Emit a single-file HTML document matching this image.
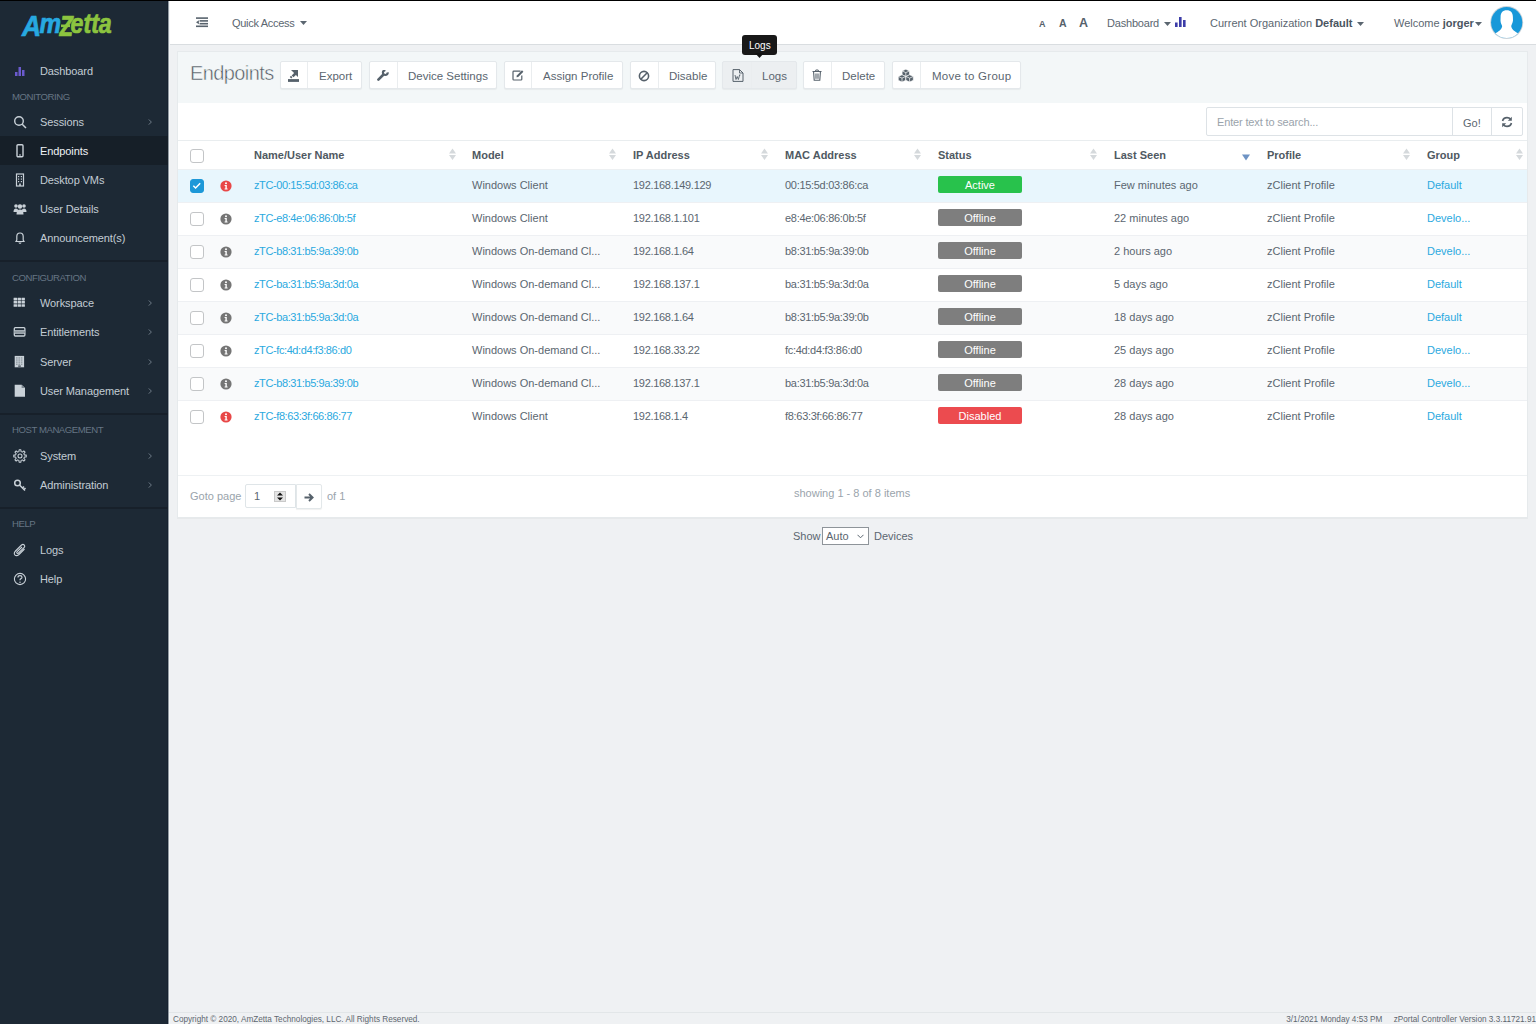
<!DOCTYPE html>
<html><head><meta charset="utf-8">
<style>
*{box-sizing:border-box;margin:0;padding:0}
html,body{width:1536px;height:1024px;overflow:hidden;background:#eff1f3;font-family:"Liberation Sans",sans-serif;color:#5e6770}
.abs{position:absolute;white-space:nowrap}
#topline{position:absolute;left:0;top:0;width:1536px;height:1px;background:#000}
#side{position:absolute;left:0;top:0;width:168px;height:1024px;background:#1d2935;border-right:1px solid #172230}
#sedge{position:absolute;left:168px;top:1px;width:2px;height:1023px;background:linear-gradient(90deg,#939ca3 50%,#f4f6f7 50%)}
.si{position:absolute;left:0;width:168px;height:29px;}
.si .lbl{position:absolute;left:40px;top:9px;font-size:11px;color:#c3ccd4;letter-spacing:-0.1px}
.si .ic{position:absolute;left:13px;top:8px;width:14px;height:14px}
.si .chev{position:absolute;left:147px;top:11.5px;width:6px;height:8px}
.sh{position:absolute;left:12px;margin-top:1px;font-size:9.6px;letter-spacing:-0.45px;color:#667584}
.sep{position:absolute;left:0;width:168px;height:2px;background:#17202a}
.hx{font-size:11px;color:#5b6670}
#hdr{position:absolute;left:168px;top:1px;width:1368px;height:44px;background:#fff;border-bottom:1px solid #d9dde0}
#panel{position:absolute;left:177px;top:51px;width:1351px;height:467px;background:#fff;box-shadow:0 1px 0 rgba(0,0,0,0.03);border:1px solid #e6eaec}
#tbar{position:absolute;left:178px;top:52px;width:1349px;height:50.5px;background:#f3f7f8}
#ttl{left:190px;top:62px;font-size:20px;letter-spacing:-0.6px;color:#4e5860;-webkit-text-stroke:0.5px #f3f7f8}
.btn{position:absolute;top:61px;height:28px;border:1px solid #e4e8eb;border-radius:2px;box-shadow:0 1px 1px rgba(0,0,0,0.05)}
.bdiv{position:absolute;top:0;width:1px;height:26px;background:#eaedef}
.blbl{top:70px;font-size:11.5px;color:#5b6670}
.cb{position:absolute;left:190px;width:14px;height:14px;border:1.3px solid #c3c5c7;border-radius:3px;background:#fff}
.cb.sel{background:#1d98d8;border-color:#1d98d8}
.th{top:149px;font-size:11px;font-weight:700;color:#4f5962}
.row{position:absolute;left:178px;width:1349px;height:33px;border-bottom:1px solid #eef0f3}
.td{font-size:11px;color:#5b6670}
.nm{letter-spacing:-0.4px}
.mac,.ip{letter-spacing:-0.3px}
.lk{color:#2aa9e0}
.badge{width:84px;height:17px;padding-top:1px;color:#fff;font-size:11px;text-align:center;line-height:17px;border-radius:2px}
</style></head><body>
<div id="side">
  <!-- logo -->
  <svg class="abs" style="left:0;top:0" width="168" height="50" viewBox="0 0 168 50" font-family="Liberation Sans" font-weight="bold" font-style="italic" stroke-width="0.7">
  <text transform="translate(22,36) scale(0.88,1)" font-size="30" fill="#27a9e1" stroke="#27a9e1">A</text>
  <text transform="translate(39.6,33) scale(0.9,1)" font-size="27" fill="#27a9e1" stroke="#27a9e1">m</text>
  <text transform="translate(59.6,36) scale(0.74,1)" font-size="30" fill="#8cc43f" stroke="#8cc43f">Z</text>
  <text transform="translate(70.5,33) scale(0.86,1)" font-size="27" fill="#8cc43f" stroke="#8cc43f">etta</text>
  <rect x="61" y="24.5" width="9" height="2.6" fill="#8cc43f"/>
  </svg>
<div class="si" style="top:56px;"><svg class="ic" viewBox="0 0 14 14"><rect x="2" y="8" width="2.5" height="4" fill="#6a5acd"/><rect x="5.5" y="3" width="2.5" height="9" fill="#6a5acd"/><rect x="9" y="6" width="2.5" height="6" fill="#6a5acd"/></svg><span class="lbl" style="">Dashboard</span></div>
<div class="si" style="top:107px;"><svg class="ic" viewBox="0 0 14 14"><circle cx="6" cy="6" r="4.3" fill="none" stroke="#c9d1d8" stroke-width="1.4"/><line x1="9.2" y1="9.2" x2="13" y2="13" stroke="#c9d1d8" stroke-width="1.5"/></svg><span class="lbl" style="">Sessions</span><svg class="chev" viewBox="0 0 6 10"><path d="M1.5 0.6 L4.7 3.8 L1.5 7" fill="none" stroke="#808c97" stroke-width="1.05"/></svg></div>
<div class="si" style="top:136px;background:#161f28;"><svg class="ic" viewBox="0 0 14 14"><rect x="4" y="0.8" width="6" height="12" rx="1" fill="none" stroke="#c9d1d8" stroke-width="1.4"/><line x1="6" y1="11" x2="8" y2="11" stroke="#c9d1d8" stroke-width="1"/></svg><span class="lbl" style="color:#eef2f5;">Endpoints</span></div>
<div class="si" style="top:165px;"><svg class="ic" viewBox="0 0 14 14"><rect x="3.5" y="1" width="7" height="12" fill="none" stroke="#c9d1d8" stroke-width="1.2"/><g fill="#c9d1d8"><rect x="5" y="3" width="1.2" height="1.2"/><rect x="7.8" y="3" width="1.2" height="1.2"/><rect x="5" y="5.5" width="1.2" height="1.2"/><rect x="7.8" y="5.5" width="1.2" height="1.2"/><rect x="5" y="8" width="1.2" height="1.2"/><rect x="7.8" y="8" width="1.2" height="1.2"/><rect x="6.2" y="10.5" width="1.6" height="2.5"/></g></svg><span class="lbl" style="">Desktop VMs</span></div>
<div class="si" style="top:194px;"><svg class="ic" viewBox="0 0 14 14"><g fill="#c9d1d8"><circle cx="3" cy="4" r="1.8"/><circle cx="11" cy="4" r="1.8"/><circle cx="7" cy="4.5" r="2.2"/><path d="M0.5 10 Q0.5 6.5 3 6.5 Q5 6.5 5 8 L5 10Z"/><path d="M13.5 10 Q13.5 6.5 11 6.5 Q9 6.5 9 8 L9 10Z"/><path d="M3.5 12.5 Q3.5 7.5 7 7.5 Q10.5 7.5 10.5 12.5Z"/></g></svg><span class="lbl" style="">User Details</span></div>
<div class="si" style="top:223px;"><svg class="ic" viewBox="0 0 14 14"><path d="M3 10.5 L3.8 9 L3.8 5.5 Q3.8 2 7 2 Q10.2 2 10.2 5.5 L10.2 9 L11 10.5 Z" fill="none" stroke="#c9d1d8" stroke-width="1.2"/><path d="M5.8 11.5 Q7 13.3 8.2 11.5" fill="none" stroke="#c9d1d8" stroke-width="1.1"/></svg><span class="lbl" style="">Announcement(s)</span></div>
<div class="si" style="top:288px;"><svg class="ic" viewBox="0 0 14 14"><g fill="#c9d1d8"><rect x="0.60" y="1.80" width="3.4" height="2.6" rx="0.3"/><rect x="0.60" y="5.00" width="3.4" height="2.6" rx="0.3"/><rect x="0.60" y="8.20" width="3.4" height="2.6" rx="0.3"/><rect x="4.55" y="1.80" width="3.4" height="2.6" rx="0.3"/><rect x="4.55" y="5.00" width="3.4" height="2.6" rx="0.3"/><rect x="4.55" y="8.20" width="3.4" height="2.6" rx="0.3"/><rect x="8.50" y="1.80" width="3.4" height="2.6" rx="0.3"/><rect x="8.50" y="5.00" width="3.4" height="2.6" rx="0.3"/><rect x="8.50" y="8.20" width="3.4" height="2.6" rx="0.3"/></g></svg><span class="lbl" style="">Workspace</span><svg class="chev" viewBox="0 0 6 10"><path d="M1.5 0.6 L4.7 3.8 L1.5 7" fill="none" stroke="#808c97" stroke-width="1.05"/></svg></div>
<div class="si" style="top:317px;"><svg class="ic" viewBox="0 0 14 14"><rect x="1.3" y="2.7" width="10.6" height="8.3" rx="1" fill="none" stroke="#c9d1d8" stroke-width="1.3"/><rect x="1.3" y="5.6" width="10.6" height="2.6" fill="#8d979f"/><rect x="1.3" y="5.3" width="10.6" height="0.8" fill="#c9d1d8"/><rect x="1.3" y="7.9" width="10.6" height="0.8" fill="#c9d1d8"/></svg><span class="lbl" style="">Entitlements</span><svg class="chev" viewBox="0 0 6 10"><path d="M1.5 0.6 L4.7 3.8 L1.5 7" fill="none" stroke="#808c97" stroke-width="1.05"/></svg></div>
<div class="si" style="top:347px;"><svg class="ic" viewBox="0 0 14 14"><rect x="1.7" y="0.9" width="9.4" height="11.4" fill="#c9d1d8"/><g fill="#8d979f"><rect x="3.0" y="2.3" width="1.6" height="1.3"/><rect x="3.0" y="4.4" width="1.6" height="1.3"/><rect x="3.0" y="6.5" width="1.6" height="1.3"/><rect x="3.0" y="8.6" width="1.6" height="1.3"/><rect x="5.4" y="2.3" width="1.6" height="1.3"/><rect x="5.4" y="4.4" width="1.6" height="1.3"/><rect x="5.4" y="6.5" width="1.6" height="1.3"/><rect x="5.4" y="8.6" width="1.6" height="1.3"/><rect x="7.8" y="2.3" width="1.6" height="1.3"/><rect x="7.8" y="4.4" width="1.6" height="1.3"/><rect x="7.8" y="6.5" width="1.6" height="1.3"/><rect x="7.8" y="8.6" width="1.6" height="1.3"/></g><rect x="5.2" y="10.6" width="2.6" height="1" fill="#1d2935"/></svg><span class="lbl" style="">Server</span><svg class="chev" viewBox="0 0 6 10"><path d="M1.5 0.6 L4.7 3.8 L1.5 7" fill="none" stroke="#808c97" stroke-width="1.05"/></svg></div>
<div class="si" style="top:376px;"><svg class="ic" viewBox="0 0 14 14"><path d="M1.7 0.7 L8.6 0.7 L12 4.1 L12 12.8 L1.7 12.8 Z" fill="#c9d1d8"/><path d="M8.6 0.7 L8.6 4.1 L12 4.1Z" fill="#7d8891"/></svg><span class="lbl" style="">User Management</span><svg class="chev" viewBox="0 0 6 10"><path d="M1.5 0.6 L4.7 3.8 L1.5 7" fill="none" stroke="#808c97" stroke-width="1.05"/></svg></div>
<div class="si" style="top:441px;"><svg class="ic" viewBox="0 0 14 14"><path d="M11.37 5.91 L13.24 6.12 L13.24 7.88 L11.37 8.09 L10.86 9.32 L12.03 10.79 L10.79 12.03 L9.32 10.86 L8.09 11.37 L7.88 13.24 L6.12 13.24 L5.91 11.37 L4.68 10.86 L3.21 12.03 L1.97 10.79 L3.14 9.32 L2.63 8.09 L0.76 7.88 L0.76 6.12 L2.63 5.91 L3.14 4.68 L1.97 3.21 L3.21 1.97 L4.68 3.14 L5.91 2.63 L6.12 0.76 L7.88 0.76 L8.09 2.63 L9.32 3.14 L10.79 1.97 L12.03 3.21 L10.86 4.68Z" fill="none" stroke="#c9d1d8" stroke-width="1.05" stroke-linejoin="round"/><circle cx="7" cy="7" r="2" fill="none" stroke="#c9d1d8" stroke-width="1.05"/></svg><span class="lbl" style="">System</span><svg class="chev" viewBox="0 0 6 10"><path d="M1.5 0.6 L4.7 3.8 L1.5 7" fill="none" stroke="#808c97" stroke-width="1.05"/></svg></div>
<div class="si" style="top:470px;"><svg class="ic" viewBox="0 0 14 14"><circle cx="4.5" cy="5" r="2.8" fill="none" stroke="#c9d1d8" stroke-width="1.5"/><path d="M6.5 7 L12 12.5 M9.5 10 L11 8.5 M11 11.5 L12.5 10" stroke="#c9d1d8" stroke-width="1.5" fill="none"/></svg><span class="lbl" style="">Administration</span><svg class="chev" viewBox="0 0 6 10"><path d="M1.5 0.6 L4.7 3.8 L1.5 7" fill="none" stroke="#808c97" stroke-width="1.05"/></svg></div>
<div class="si" style="top:535px;"><svg class="ic" viewBox="0 0 14 14"><path d="M11.5 6 L6 11.5 Q3.5 13.5 1.8 11.8 Q0.5 10 2.5 8 L8.5 2 Q10 0.8 11.2 2 Q12.3 3.3 11 4.6 L5.5 10 Q4.6 10.8 4 10.2 Q3.4 9.6 4.2 8.7 L9 4" fill="none" stroke="#c9d1d8" stroke-width="1.1"/></svg><span class="lbl" style="">Logs</span></div>
<div class="si" style="top:564px;"><svg class="ic" viewBox="0 0 14 14"><circle cx="7" cy="7" r="5.6" fill="none" stroke="#c9d1d8" stroke-width="1.1"/><path d="M5 5.4 Q5 3.6 7 3.6 Q9 3.6 9 5.2 Q9 6.3 7.6 6.9 Q7 7.2 7 8.3" fill="none" stroke="#c9d1d8" stroke-width="1.2"/><circle cx="7" cy="10.2" r="0.75" fill="#c9d1d8"/></svg><span class="lbl" style="">Help</span></div>
<span class="sh" style="top:90px">MONITORING</span>
<span class="sh" style="top:271px">CONFIGURATION</span>
<span class="sh" style="top:423px">HOST MANAGEMENT</span>
<span class="sh" style="top:517px">HELP</span>
<div class="sep" style="top:260px"></div>
<div class="sep" style="top:413px"></div>
<div class="sep" style="top:507px"></div>
</div>
<div id="hdr"></div>
<div id="topline"></div>
<div id="sedge"></div>
<svg class="abs" style="left:196px;top:16px" width="13" height="12" viewBox="0 0 13 12"><g fill="#58636d"><rect x="0" y="1.3" width="12" height="1.6"/><rect x="3.6" y="4.1" width="8.4" height="1.6"/><rect x="3.6" y="6.9" width="8.4" height="1.6"/><rect x="0" y="9.5" width="12" height="1.6"/><path d="M0 6.2 L2.9 4.2 L2.9 8.2Z"/></g></svg>
<span class="abs hx" style="left:232px;top:17px;letter-spacing:-0.3px">Quick Access</span>
<svg class="abs" style="left:300px;top:21px" width="7" height="4" viewBox="0 0 7 4"><path d="M0 0 L7 0 L3.5 4Z" fill="#5b6670"/></svg>
<span class="abs" style="left:1039px;top:19px;font-size:9px;font-weight:700;color:#56616b">A</span>
<span class="abs" style="left:1059px;top:17px;font-size:10.5px;font-weight:700;color:#56616b">A</span>
<span class="abs" style="left:1079px;top:16px;font-size:12.5px;font-weight:700;color:#56616b">A</span>
<span class="abs hx" style="left:1107px;top:17px;letter-spacing:-0.2px">Dashboard</span>
<svg class="abs" style="left:1164px;top:22px" width="7" height="4" viewBox="0 0 7 4"><path d="M0 0 L7 0 L3.5 4Z" fill="#5b6670"/></svg>
<svg class="abs" style="left:1175px;top:17px" width="11" height="10" viewBox="0 0 11 10"><g fill="#3c3ca8"><rect x="0" y="5.5" width="2.6" height="4.5"/><rect x="4" y="0" width="2.6" height="10"/><rect x="8" y="3" width="2.6" height="7"/></g></svg>
<span class="abs hx" style="left:1210px;top:17px">Current Organization <b style="color:#4a5560">Default</b></span>
<svg class="abs" style="left:1357px;top:22px" width="7" height="4" viewBox="0 0 7 4"><path d="M0 0 L7 0 L3.5 4Z" fill="#5b6670"/></svg>
<span class="abs hx" style="left:1394px;top:17px">Welcome <b style="color:#4a5560">jorger</b></span>
<svg class="abs" style="left:1475px;top:22px" width="7" height="4" viewBox="0 0 7 4"><path d="M0 0 L7 0 L3.5 4Z" fill="#5b6670"/></svg>
<svg class="abs" style="left:1490px;top:5.5px" width="34" height="34" viewBox="0 0 34 34"><defs><clipPath id="avc"><circle cx="16.7" cy="16.5" r="15.6"/></clipPath></defs><circle cx="16.7" cy="16.5" r="16.5" fill="#c9d3da"/><circle cx="16.7" cy="16.5" r="15.6" fill="#1898d9"/><g clip-path="url(#avc)"><path d="M16.7 4.3 C20.8 4.3 22.9 7 22.9 11 L23 14.5 C22.6 17 21.8 18.3 21.2 20 C21.6 23.5 25 25.8 29 27.8 L29 34 L4.5 34 L4.5 27.8 C8.5 25.8 11.8 23.5 12.2 20 C11.4 18.3 10.6 17 10.5 14.5 L10.6 11 C10.6 7 12.6 4.3 16.7 4.3Z" fill="#fff"/></g></svg>
<div id="panel"></div><div id="tbar"></div>
<span class="abs" id="ttl">Endpoints</span>
<div class="btn" style="left:280px;width:82px;background:#fff"><div class="bdiv" style="left:26px"></div></div><svg class="abs" style="left:288px;top:69px" width="12" height="14" viewBox="0 0 12 14"><path d="M3 1 L10 1 L10 8 L7.9 5.9 L5.5 8.3 L3.7 6.5 L6.1 4.1 Z" fill="#56616b"/><path d="M1.8 8 L3 6.8 L4.4 8.2 L3.2 9.4 Z" fill="#56616b"/><rect x="0" y="10.1" width="11" height="2.8" fill="#56616b"/></svg><span class="abs blbl" style="left:319px">Export</span>
<div class="btn" style="left:369px;width:128px;background:#fff"><div class="bdiv" style="left:27px"></div></div><svg class="abs" style="left:377px;top:70px" width="13" height="12" viewBox="0 0 13 12"><path d="M1.4 9.6 L6 5" stroke="#56616b" stroke-width="2.6" stroke-linecap="round"/><path d="M10.69 2.39 A2.4 2.4 0 1 1 8.51 0.21" fill="none" stroke="#56616b" stroke-width="2.2"/></svg><span class="abs blbl" style="left:408px">Device Settings</span>
<div class="btn" style="left:504px;width:119px;background:#fff"><div class="bdiv" style="left:26px"></div></div><svg class="abs" style="left:512px;top:69px" width="12" height="12" viewBox="0 0 12 12"><path d="M8.5 2.2 L1.8 2.2 Q1 2.2 1 3 L1 10.2 Q1 11 1.8 11 L9 11 Q9.8 11 9.8 10.2 L9.8 6.5" fill="none" stroke="#56616b" stroke-width="1.2"/><path d="M4.5 8.3 L4.8 6.5 L10 1.3 L11.4 2.7 L6.2 7.9 Z" fill="#56616b"/></svg><span class="abs blbl" style="left:543px">Assign Profile</span>
<div class="btn" style="left:630px;width:86px;background:#fff"><div class="bdiv" style="left:27px"></div></div><svg class="abs" style="left:638px;top:70px" width="12" height="12" viewBox="0 0 12 12"><circle cx="6" cy="6" r="4.6" fill="none" stroke="#56616b" stroke-width="1.6"/><line x1="2.8" y1="9.2" x2="9.2" y2="2.8" stroke="#56616b" stroke-width="1.6"/></svg><span class="abs blbl" style="left:669px">Disable</span>
<div class="btn" style="left:722px;width:75px;background:#eceff1"><div class="bdiv" style="left:28px"></div></div><svg class="abs" style="left:732px;top:69px" width="12" height="13" viewBox="0 0 12 13"><path d="M1 0.6 L7.5 0.6 L11 4 L11 12.4 L1 12.4 Z" fill="none" stroke="#56616b" stroke-width="1"/><path d="M7.5 0.6 L7.5 4 L11 4" fill="none" stroke="#56616b" stroke-width="0.9"/><path d="M3 6 L4 10.5 L5.2 7.5 L6.4 10.5 L7.6 6 M7.2 6 L8.4 6" fill="none" stroke="#56616b" stroke-width="0.9"/></svg><span class="abs blbl" style="left:762px">Logs</span>
<div class="btn" style="left:803px;width:82px;background:#fff"><div class="bdiv" style="left:27px"></div></div><svg class="abs" style="left:812px;top:69px" width="10" height="12" viewBox="0 0 10 12"><path d="M0.5 2.5 L9.5 2.5 M3.5 2.5 L3.8 1 L6.2 1 L6.5 2.5" fill="none" stroke="#56616b" stroke-width="1"/><path d="M1.6 3 L2.2 11.2 L7.8 11.2 L8.4 3" fill="none" stroke="#56616b" stroke-width="1.1"/><path d="M3.8 4.5 L3.8 9.8 M5 4.5 L5 9.8 M6.2 4.5 L6.2 9.8" stroke="#56616b" stroke-width="0.8"/></svg><span class="abs blbl" style="left:842px">Delete</span>
<div class="btn" style="left:892px;width:129px;background:#fff"><div class="bdiv" style="left:27px"></div></div><svg class="abs" style="left:898px;top:69px" width="16" height="14" viewBox="0 0 16 14"><path d="M7.8 0.3 L11.5 1.96 L11.5 5.84 L7.8 7.5 L4.1 5.84 L4.1 1.96Z" fill="#56616b" stroke="#fff" stroke-width="0.6"/><path d="M4.1 1.96 L7.8 3.61 L11.5 1.96 M7.8 3.61 L7.8 7.5" fill="none" stroke="#fff" stroke-width="0.7"/><path d="M4 5.8 L7.7 7.46 L7.7 11.34 L4 13.0 L0.2999999999999998 11.34 L0.2999999999999998 7.46Z" fill="#56616b" stroke="#fff" stroke-width="0.6"/><path d="M0.2999999999999998 7.46 L4 9.11 L7.7 7.46 M4 9.11 L4 13.0" fill="none" stroke="#fff" stroke-width="0.7"/><path d="M11.6 5.8 L15.3 7.46 L15.3 11.34 L11.6 13.0 L7.8999999999999995 11.34 L7.8999999999999995 7.46Z" fill="#56616b" stroke="#fff" stroke-width="0.6"/><path d="M7.8999999999999995 7.46 L11.6 9.11 L15.3 7.46 M11.6 9.11 L11.6 13.0" fill="none" stroke="#fff" stroke-width="0.7"/></svg><span class="abs blbl" style="left:932px"><span style="letter-spacing:0.25px">Move to Group</span></span>
<div class="abs" style="left:742px;top:35px;width:35px;height:19.5px;background:#181818;border-radius:3px"></div><svg class="abs" style="left:755px;top:53px" width="9" height="6" viewBox="0 0 9 6"><path d="M0 0 L9 0 L4.5 5Z" fill="#111"/></svg><span class="abs" style="left:749px;top:40px;font-size:10px;color:#fff">Logs</span>
<div class="abs" style="left:1206px;top:107px;width:317px;height:29px;border:1px solid #dde2e6;border-radius:2px;background:#fff"></div>
<div class="abs" style="left:1452px;top:107px;width:1px;height:29px;background:#dde2e6"></div><div class="abs" style="left:1491px;top:107px;width:1px;height:29px;background:#dde2e6"></div>
<span class="abs" style="left:1217px;top:116px;font-size:11px;letter-spacing:-0.15px;color:#9aa3ab">Enter text to search...</span>
<span class="abs" style="left:1463px;top:117px;font-size:11px;color:#5b6670">Go!</span>
<svg class="abs" style="left:1501px;top:116px" width="12" height="12" viewBox="0 0 12 12"><path d="M1.6 5 Q2.3 1.6 6 1.6 Q8.3 1.6 9.6 3.3" fill="none" stroke="#56616b" stroke-width="1.7"/><path d="M10.8 0.8 L10.8 4.8 L6.8 4.8Z" fill="#56616b"/><path d="M10.4 7 Q9.7 10.4 6 10.4 Q3.7 10.4 2.4 8.7" fill="none" stroke="#56616b" stroke-width="1.7"/><path d="M1.2 11.2 L1.2 7.2 L5.2 7.2Z" fill="#56616b"/></svg>
<div class="abs" style="left:178px;top:140px;width:1349px;height:1px;background:#e9edef"></div>
<div class="cb" style="top:149px"></div>
<div class="abs" style="left:178px;top:169px;width:1349px;height:1px;background:#edf0f2"></div>
<span class="abs th" style="left:254px">Name/User Name</span>
<svg class="abs" style="left:449px;top:148px" width="7" height="13" viewBox="0 0 7 13"><path d="M3.5 0.5 L7 5.5 L0 5.5Z M0 7 L7 7 L3.5 12Z" fill="#d5d9dc"/></svg>
<span class="abs th" style="left:472px">Model</span>
<svg class="abs" style="left:609px;top:148px" width="7" height="13" viewBox="0 0 7 13"><path d="M3.5 0.5 L7 5.5 L0 5.5Z M0 7 L7 7 L3.5 12Z" fill="#d5d9dc"/></svg>
<span class="abs th" style="left:633px">IP Address</span>
<svg class="abs" style="left:761px;top:148px" width="7" height="13" viewBox="0 0 7 13"><path d="M3.5 0.5 L7 5.5 L0 5.5Z M0 7 L7 7 L3.5 12Z" fill="#d5d9dc"/></svg>
<span class="abs th" style="left:785px">MAC Address</span>
<svg class="abs" style="left:914px;top:148px" width="7" height="13" viewBox="0 0 7 13"><path d="M3.5 0.5 L7 5.5 L0 5.5Z M0 7 L7 7 L3.5 12Z" fill="#d5d9dc"/></svg>
<span class="abs th" style="left:938px">Status</span>
<svg class="abs" style="left:1090px;top:148px" width="7" height="13" viewBox="0 0 7 13"><path d="M3.5 0.5 L7 5.5 L0 5.5Z M0 7 L7 7 L3.5 12Z" fill="#d5d9dc"/></svg>
<span class="abs th" style="left:1114px">Last Seen</span>
<span class="abs th" style="left:1267px">Profile</span>
<svg class="abs" style="left:1403px;top:148px" width="7" height="13" viewBox="0 0 7 13"><path d="M3.5 0.5 L7 5.5 L0 5.5Z M0 7 L7 7 L3.5 12Z" fill="#d5d9dc"/></svg>
<span class="abs th" style="left:1427px">Group</span>
<svg class="abs" style="left:1516px;top:148px" width="7" height="13" viewBox="0 0 7 13"><path d="M3.5 0.5 L7 5.5 L0 5.5Z M0 7 L7 7 L3.5 12Z" fill="#d5d9dc"/></svg>
<svg class="abs" style="left:1242px;top:154px" width="8" height="7" viewBox="0 0 8 7"><path d="M0 0.5 L8 0.5 L4 6.5Z" fill="#6e93c4"/></svg>
<div class="row" style="top:170px;background:#e8f6fd;"></div>
<div class="cb sel" style="top:179px"><svg width="13" height="13" viewBox="0 0 13 13" style="position:absolute;left:-1px;top:-1px"><path d="M3.3 6.8 L5.6 9 L10.2 4.3" fill="none" stroke="#fff" stroke-width="1.5"/></svg></div>
<svg class="abs" style="left:220px;top:180px" width="12" height="12" viewBox="0 0 12 12"><circle cx="6" cy="6" r="5.6" fill="#e84747"/><circle cx="6" cy="3.3" r="1" fill="#fff"/><path d="M4.6 5 L6.8 5 L6.8 8.5 L7.6 8.5 L7.6 9.5 L4.6 9.5 L4.6 8.5 L5.4 8.5 L5.4 6 L4.6 6Z" fill="#fff"/></svg>
<span class="abs td lk nm" style="left:254px;top:179px">zTC-00:15:5d:03:86:ca</span>
<span class="abs td" style="left:472px;top:179px">Windows Client</span>
<span class="abs td ip" style="left:633px;top:179px">192.168.149.129</span>
<span class="abs td mac" style="left:785px;top:179px">00:15:5d:03:86:ca</span>
<div class="abs badge" style="left:938px;top:176px;background:#28c24c">Active</div>
<span class="abs td" style="left:1114px;top:179px">Few minutes ago</span>
<span class="abs td" style="left:1267px;top:179px">zClient Profile</span>
<span class="abs td lk" style="left:1427px;top:179px">Default</span>
<div class="row" style="top:203px;background:#fff;"></div>
<div class="cb" style="top:212px"></div>
<svg class="abs" style="left:220px;top:213px" width="12" height="12" viewBox="0 0 12 12"><circle cx="6" cy="6" r="5.6" fill="#757575"/><circle cx="6" cy="3.3" r="1" fill="#fff"/><path d="M4.6 5 L6.8 5 L6.8 8.5 L7.6 8.5 L7.6 9.5 L4.6 9.5 L4.6 8.5 L5.4 8.5 L5.4 6 L4.6 6Z" fill="#fff"/></svg>
<span class="abs td lk nm" style="left:254px;top:212px">zTC-e8:4e:06:86:0b:5f</span>
<span class="abs td" style="left:472px;top:212px">Windows Client</span>
<span class="abs td ip" style="left:633px;top:212px">192.168.1.101</span>
<span class="abs td mac" style="left:785px;top:212px">e8:4e:06:86:0b:5f</span>
<div class="abs badge" style="left:938px;top:209px;background:#7e7e7e">Offline</div>
<span class="abs td" style="left:1114px;top:212px">22 minutes ago</span>
<span class="abs td" style="left:1267px;top:212px">zClient Profile</span>
<span class="abs td lk" style="left:1427px;top:212px">Develo...</span>
<div class="row" style="top:236px;background:#f9fafb;"></div>
<div class="cb" style="top:245px"></div>
<svg class="abs" style="left:220px;top:246px" width="12" height="12" viewBox="0 0 12 12"><circle cx="6" cy="6" r="5.6" fill="#757575"/><circle cx="6" cy="3.3" r="1" fill="#fff"/><path d="M4.6 5 L6.8 5 L6.8 8.5 L7.6 8.5 L7.6 9.5 L4.6 9.5 L4.6 8.5 L5.4 8.5 L5.4 6 L4.6 6Z" fill="#fff"/></svg>
<span class="abs td lk nm" style="left:254px;top:245px">zTC-b8:31:b5:9a:39:0b</span>
<span class="abs td" style="left:472px;top:245px">Windows On-demand Cl...</span>
<span class="abs td ip" style="left:633px;top:245px">192.168.1.64</span>
<span class="abs td mac" style="left:785px;top:245px">b8:31:b5:9a:39:0b</span>
<div class="abs badge" style="left:938px;top:242px;background:#7e7e7e">Offline</div>
<span class="abs td" style="left:1114px;top:245px">2 hours ago</span>
<span class="abs td" style="left:1267px;top:245px">zClient Profile</span>
<span class="abs td lk" style="left:1427px;top:245px">Develo...</span>
<div class="row" style="top:269px;background:#fff;"></div>
<div class="cb" style="top:278px"></div>
<svg class="abs" style="left:220px;top:279px" width="12" height="12" viewBox="0 0 12 12"><circle cx="6" cy="6" r="5.6" fill="#757575"/><circle cx="6" cy="3.3" r="1" fill="#fff"/><path d="M4.6 5 L6.8 5 L6.8 8.5 L7.6 8.5 L7.6 9.5 L4.6 9.5 L4.6 8.5 L5.4 8.5 L5.4 6 L4.6 6Z" fill="#fff"/></svg>
<span class="abs td lk nm" style="left:254px;top:278px">zTC-ba:31:b5:9a:3d:0a</span>
<span class="abs td" style="left:472px;top:278px">Windows On-demand Cl...</span>
<span class="abs td ip" style="left:633px;top:278px">192.168.137.1</span>
<span class="abs td mac" style="left:785px;top:278px">ba:31:b5:9a:3d:0a</span>
<div class="abs badge" style="left:938px;top:275px;background:#7e7e7e">Offline</div>
<span class="abs td" style="left:1114px;top:278px">5 days ago</span>
<span class="abs td" style="left:1267px;top:278px">zClient Profile</span>
<span class="abs td lk" style="left:1427px;top:278px">Default</span>
<div class="row" style="top:302px;background:#f9fafb;"></div>
<div class="cb" style="top:311px"></div>
<svg class="abs" style="left:220px;top:312px" width="12" height="12" viewBox="0 0 12 12"><circle cx="6" cy="6" r="5.6" fill="#757575"/><circle cx="6" cy="3.3" r="1" fill="#fff"/><path d="M4.6 5 L6.8 5 L6.8 8.5 L7.6 8.5 L7.6 9.5 L4.6 9.5 L4.6 8.5 L5.4 8.5 L5.4 6 L4.6 6Z" fill="#fff"/></svg>
<span class="abs td lk nm" style="left:254px;top:311px">zTC-ba:31:b5:9a:3d:0a</span>
<span class="abs td" style="left:472px;top:311px">Windows On-demand Cl...</span>
<span class="abs td ip" style="left:633px;top:311px">192.168.1.64</span>
<span class="abs td mac" style="left:785px;top:311px">b8:31:b5:9a:39:0b</span>
<div class="abs badge" style="left:938px;top:308px;background:#7e7e7e">Offline</div>
<span class="abs td" style="left:1114px;top:311px">18 days ago</span>
<span class="abs td" style="left:1267px;top:311px">zClient Profile</span>
<span class="abs td lk" style="left:1427px;top:311px">Default</span>
<div class="row" style="top:335px;background:#fff;"></div>
<div class="cb" style="top:344px"></div>
<svg class="abs" style="left:220px;top:345px" width="12" height="12" viewBox="0 0 12 12"><circle cx="6" cy="6" r="5.6" fill="#757575"/><circle cx="6" cy="3.3" r="1" fill="#fff"/><path d="M4.6 5 L6.8 5 L6.8 8.5 L7.6 8.5 L7.6 9.5 L4.6 9.5 L4.6 8.5 L5.4 8.5 L5.4 6 L4.6 6Z" fill="#fff"/></svg>
<span class="abs td lk nm" style="left:254px;top:344px">zTC-fc:4d:d4:f3:86:d0</span>
<span class="abs td" style="left:472px;top:344px">Windows On-demand Cl...</span>
<span class="abs td ip" style="left:633px;top:344px">192.168.33.22</span>
<span class="abs td mac" style="left:785px;top:344px">fc:4d:d4:f3:86:d0</span>
<div class="abs badge" style="left:938px;top:341px;background:#7e7e7e">Offline</div>
<span class="abs td" style="left:1114px;top:344px">25 days ago</span>
<span class="abs td" style="left:1267px;top:344px">zClient Profile</span>
<span class="abs td lk" style="left:1427px;top:344px">Develo...</span>
<div class="row" style="top:368px;background:#f9fafb;"></div>
<div class="cb" style="top:377px"></div>
<svg class="abs" style="left:220px;top:378px" width="12" height="12" viewBox="0 0 12 12"><circle cx="6" cy="6" r="5.6" fill="#757575"/><circle cx="6" cy="3.3" r="1" fill="#fff"/><path d="M4.6 5 L6.8 5 L6.8 8.5 L7.6 8.5 L7.6 9.5 L4.6 9.5 L4.6 8.5 L5.4 8.5 L5.4 6 L4.6 6Z" fill="#fff"/></svg>
<span class="abs td lk nm" style="left:254px;top:377px">zTC-b8:31:b5:9a:39:0b</span>
<span class="abs td" style="left:472px;top:377px">Windows On-demand Cl...</span>
<span class="abs td ip" style="left:633px;top:377px">192.168.137.1</span>
<span class="abs td mac" style="left:785px;top:377px">ba:31:b5:9a:3d:0a</span>
<div class="abs badge" style="left:938px;top:374px;background:#7e7e7e">Offline</div>
<span class="abs td" style="left:1114px;top:377px">28 days ago</span>
<span class="abs td" style="left:1267px;top:377px">zClient Profile</span>
<span class="abs td lk" style="left:1427px;top:377px">Develo...</span>
<div class="row" style="top:401px;background:#fff;border-bottom:none;"></div>
<div class="cb" style="top:410px"></div>
<svg class="abs" style="left:220px;top:411px" width="12" height="12" viewBox="0 0 12 12"><circle cx="6" cy="6" r="5.6" fill="#e84747"/><circle cx="6" cy="3.3" r="1" fill="#fff"/><path d="M4.6 5 L6.8 5 L6.8 8.5 L7.6 8.5 L7.6 9.5 L4.6 9.5 L4.6 8.5 L5.4 8.5 L5.4 6 L4.6 6Z" fill="#fff"/></svg>
<span class="abs td lk nm" style="left:254px;top:410px">zTC-f8:63:3f:66:86:77</span>
<span class="abs td" style="left:472px;top:410px">Windows Client</span>
<span class="abs td ip" style="left:633px;top:410px">192.168.1.4</span>
<span class="abs td mac" style="left:785px;top:410px">f8:63:3f:66:86:77</span>
<div class="abs badge" style="left:938px;top:407px;background:#ec4b4f">Disabled</div>
<span class="abs td" style="left:1114px;top:410px">28 days ago</span>
<span class="abs td" style="left:1267px;top:410px">zClient Profile</span>
<span class="abs td lk" style="left:1427px;top:410px">Default</span>
<div class="abs" style="left:178px;top:475px;width:1349px;height:1px;background:#eef1f3"></div>
<span class="abs" style="left:190px;top:490px;font-size:11px;color:#9aa4ac">Goto page</span>
<div class="abs" style="left:245px;top:484px;width:51px;height:24px;border:1px solid #dfe5e8;border-radius:2px 0 0 2px;background:#fff"></div>
<span class="abs" style="left:254px;top:490px;font-size:11px;color:#5b6670">1</span>
<div class="abs" style="left:274px;top:491px;width:12px;height:11px;background:#e4e4e4;border:1px solid #c9c9c9"></div><svg class="abs" style="left:274px;top:491px" width="12" height="11" viewBox="0 0 12 11"><path d="M6 1.5 L9 4.5 L3 4.5Z M3 6.5 L9 6.5 L6 9.5Z" fill="#111"/></svg>
<div class="abs" style="left:296px;top:484px;width:26px;height:25px;border:1px solid #e3e8ea;border-radius:0 2px 2px 0;background:#fff;box-shadow:0 1px 1px rgba(0,0,0,0.06)"></div>
<svg class="abs" style="left:304px;top:493px" width="10" height="9" viewBox="0 0 10 9"><path d="M0.5 4.5 L8 4.5 M5 1 L8.6 4.5 L5 8" fill="none" stroke="#56616b" stroke-width="1.9"/></svg>
<span class="abs" style="left:327px;top:490px;font-size:11px;color:#9aa4ac">of 1</span>
<span class="abs" style="left:794px;top:487px;font-size:11px;color:#9aa4ac">showing 1 - 8 of 8 items</span>
<span class="abs" style="left:793px;top:530px;font-size:11px;color:#5b6670">Show</span>
<div class="abs" style="left:822px;top:527px;width:47px;height:18px;border:1px solid #8e9499;background:#fff"></div><span class="abs" style="left:826px;top:530px;font-size:11px;color:#5b6670">Auto</span>
<svg class="abs" style="left:857px;top:534px" width="7" height="5" viewBox="0 0 7 5"><path d="M0.5 0.8 L3.5 3.8 L6.5 0.8" fill="none" stroke="#5b6670" stroke-width="1"/></svg>
<span class="abs" style="left:874px;top:530px;font-size:11px;color:#5b6670">Devices</span>
<div class="abs" style="left:169px;top:1012px;width:1367px;height:1px;background:#e2e6e8"></div>
<span class="abs" style="left:173px;top:1015px;font-size:8.2px;color:#5e676f">Copyright © 2020, AmZetta Technologies, LLC. All Rights Reserved.</span>
<span class="abs" style="right:0px;top:1015px;font-size:8.2px;color:#5e676f">3/1/2021 Monday 4:53 PM &nbsp;&nbsp;&nbsp; zPortal Controller Version 3.3.11721.91</span>
</body></html>
